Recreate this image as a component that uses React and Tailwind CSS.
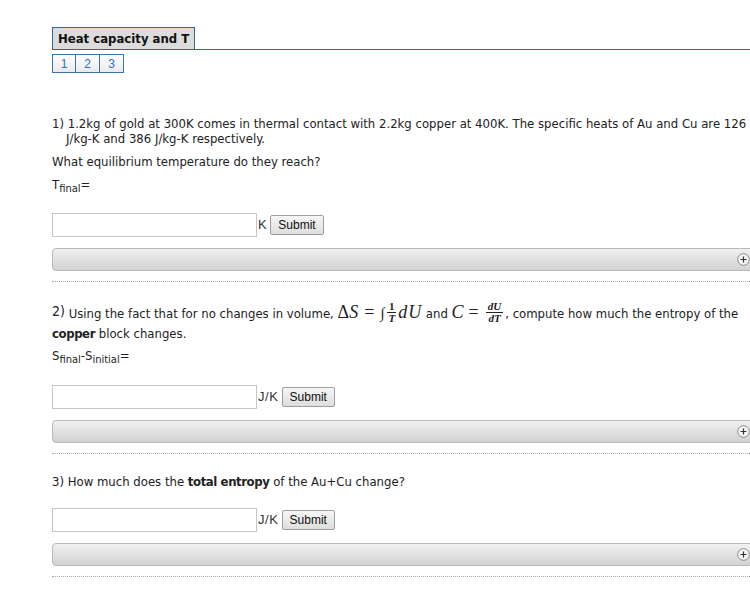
import React from 'react';

const body = { fontFamily: '"DejaVu Sans Condensed", "DejaVu Sans", sans-serif' };
const arial = { fontFamily: '"Liberation Sans", Arial, sans-serif' };
const serif = { fontFamily: '"Liberation Serif", "Times New Roman", serif' };

const PlusCircle = () => (
   <svg width="13" height="13" viewBox="0 0 13 13">
      <circle cx="6.5" cy="6.5" r="5.8" fill="#f4f4f4" stroke="#8a8a8a" strokeWidth="1" />
      <path d="M3.5 6.5h6M6.5 3.5v6" stroke="#333" strokeWidth="1.2" />
   </svg>
);

const AnswerRow = ({unit}) => (
   <div className="flex items-center h-[24px]">
      <input
         type="text"
         className="w-[205px] h-[24px] border border-[#c6c6c6] bg-white outline-none"
      />
      <span className="text-[13px] text-[#333] ml-[1px] tracking-[0.6px]" style={arial}>
         {unit}
      </span>
      <button
         className="ml-[3px] h-[20px] px-[7px] border border-[#9e9e9e] rounded-[2px] bg-gradient-to-b from-[#f6f6f6] to-[#dedede] text-[12px] text-[#111]"
         style={arial}>
         Submit
      </button>
   </div>
);

const HelpBar = () => (
   <>
      <div className="mt-[11px] h-[23px] rounded-[4px] border border-[#b9b9b9] bg-gradient-to-b from-[#f1f1f1] to-[#d2d2d2] flex items-center justify-end pr-[3px]">
         <PlusCircle />
      </div>
      <div className="mt-[10px] border-t border-dotted border-[#a8a8a8]" />
   </>
);

const Frac = ({top, bottom, small}) => (
   <span className="inline-flex flex-col items-center align-middle leading-none mx-[2px] -my-[4px] relative -top-[1px]">
      <span className={small ? 'text-[11px] italic font-bold px-[2px]' : 'text-[11px] font-bold px-[1px]'}>{top}</span>
      <span className="block w-full border-t border-[#222]" />
      <span className="text-[11px] italic font-bold px-[1px]">{bottom}</span>
   </span>
);

export default function App() {
   return (
      <div className="w-[750px] h-[592px] overflow-hidden bg-white text-[#222]" style={body}>
         <div className="pt-[27px] pl-[52px] w-[754px]">
            {/* Header tab */}
            <div className="flex border-b border-[#2f659b]">
               <div className="h-[22px] px-[5px] bg-[#dcdcdc] border border-b-0 border-[#2f659b] flex items-center text-[13px] font-bold text-[#111]">
                  Heat capacity and T
               </div>
            </div>

            {/* Pager */}
            <div className="flex mt-[4px]">
               {['1', '2', '3'].map((n, i) => (
                  <div
                     key={n}
                     className={
                        'w-[24px] h-[19px] flex items-center justify-center border border-[#3f72a8] bg-gradient-to-b from-white to-[#eaeaea] text-[12px] text-[#2a6fc0] ' +
                        (i > 0 ? 'border-l-0' : '')
                     }
                     style={arial}>
                     {n}
                  </div>
               ))}
            </div>

            {/* Question 1 */}
            <div className="mt-[43px] text-[13px] leading-[15px]">
               <p className="pl-[14px] -indent-[14px]">
                  1) 1.2kg of gold at 300K comes in thermal contact with 2.2kg copper at 400K. The specific heats of Au and Cu are 126 J/kg-K and 386 J/kg-K respectively.
               </p>
               <p className="mt-[8px]">What equilibrium temperature do they reach?</p>
               <p className="mt-[8px]">
                  T<sub className="text-[11px]">final</sub>=
               </p>
            </div>
            <div className="mt-[21px]">
               <AnswerRow unit="K" />
            </div>
            <HelpBar />

            {/* Question 2 */}
            <div className="mt-[21px] text-[13px] leading-[20px]">
               <p>
                  <span className="text-[14px] relative -top-[2px]">2)</span> Using the fact that for no changes in volume,{' '}
                  <span className="text-[18px] leading-none" style={serif}>
                     Δ<i>S</i>
                     <span className="mx-[6px]">=</span>
                     <span className="text-[15px] mr-[1px]">∫</span>
                     <Frac top="1" bottom="T" />
                     <i className="tracking-[1px]">dU</i>
                  </span>{' '}
                  and{' '}
                  <span className="text-[18px] leading-none" style={serif}>
                     <i>C</i>
                     <span className="mx-[5px]">=</span>
                     <Frac top={<i>dU</i>} bottom="dT" small />
                  </span>
                  , compute how much the entropy of the <b className="tracking-[-0.4px]">copper</b> block changes.
               </p>
               <p className="mt-[4px] leading-[15px]">
                  S<sub className="text-[11px]">final</sub>-S<sub className="text-[11px]">initial</sub>=
               </p>
            </div>
            <div className="mt-[22px]">
               <AnswerRow unit="J/K" />
            </div>
            <HelpBar />

            {/* Question 3 */}
            <div className="mt-[20px] text-[13px] leading-[15px]">
               <p>
                  3) How much does the <b className="tracking-[-0.4px]">total entropy</b> of the Au+Cu change?
               </p>
            </div>
            <div className="mt-[19px]">
               <AnswerRow unit="J/K" />
            </div>
            <HelpBar />
         </div>
      </div>
   );
}
